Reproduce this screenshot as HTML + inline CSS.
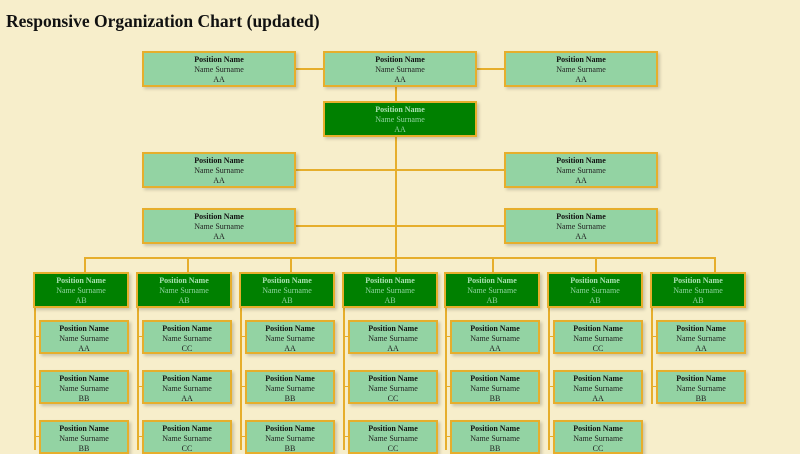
<!DOCTYPE html>
<html><head><meta charset="utf-8"><style>
body{margin:0;width:800px;height:450px;overflow:hidden;background:#f7eecb;font-family:"Liberation Serif",serif;position:relative}
h1{position:absolute;left:6px;top:11px;margin:0;font-size:17.5px;font-weight:bold;color:#111}
.b{position:absolute;box-sizing:border-box;border:2px solid #e6ae2c;background:#93d3a3;text-align:center;font-size:8px;line-height:9.8px;color:#222;padding-top:2px;box-shadow:2px 2px 3px rgba(0,0,0,.18)}
.b b{display:block;color:#111}
.d{background:#008000;color:#90d4a0}
.d b{color:#a8e0b0}
.l{position:absolute;background:#e6ae2c}
</style></head><body>
<h1>Responsive Organization Chart (updated)</h1>
<div class="l" style="left:296px;top:68px;width:208px;height:2px"></div>
<div class="l" style="left:296px;top:169px;width:208px;height:2px"></div>
<div class="l" style="left:296px;top:225px;width:208px;height:2px"></div>
<div class="l" style="left:395px;top:87px;width:2px;height:171px"></div>
<div class="l" style="left:84px;top:257px;width:632px;height:2px"></div>
<div class="l" style="left:84px;top:257px;width:2px;height:15px"></div>
<div class="l" style="left:187px;top:257px;width:2px;height:15px"></div>
<div class="l" style="left:290px;top:257px;width:2px;height:15px"></div>
<div class="l" style="left:395px;top:257px;width:2px;height:15px"></div>
<div class="l" style="left:492px;top:257px;width:2px;height:15px"></div>
<div class="l" style="left:595px;top:257px;width:2px;height:15px"></div>
<div class="l" style="left:714px;top:257px;width:2px;height:15px"></div>
<div class="b" style="left:142px;top:51px;width:154px;height:36px"><b>Position Name</b>Name Surname<br>AA</div>
<div class="b" style="left:323px;top:51px;width:154px;height:36px"><b>Position Name</b>Name Surname<br>AA</div>
<div class="b" style="left:504px;top:51px;width:154px;height:36px"><b>Position Name</b>Name Surname<br>AA</div>
<div class="b d" style="left:323px;top:101px;width:154px;height:36px"><b>Position Name</b>Name Surname<br>AA</div>
<div class="b" style="left:142px;top:152px;width:154px;height:36px"><b>Position Name</b>Name Surname<br>AA</div>
<div class="b" style="left:504px;top:152px;width:154px;height:36px"><b>Position Name</b>Name Surname<br>AA</div>
<div class="b" style="left:142px;top:208px;width:154px;height:36px"><b>Position Name</b>Name Surname<br>AA</div>
<div class="b" style="left:504px;top:208px;width:154px;height:36px"><b>Position Name</b>Name Surname<br>AA</div>

<div class="l" style="left:34px;top:308px;width:2px;height:142px"></div>
<div class="l" style="left:137px;top:308px;width:2px;height:142px"></div>
<div class="l" style="left:240px;top:308px;width:2px;height:142px"></div>
<div class="l" style="left:343px;top:308px;width:2px;height:142px"></div>
<div class="l" style="left:445px;top:308px;width:2px;height:142px"></div>
<div class="l" style="left:548px;top:308px;width:2px;height:142px"></div>
<div class="l" style="left:651px;top:308px;width:2px;height:96px"></div>

<div class="b d" style="left:33px;top:272px;width:96px;height:36px"><b>Position Name</b>Name Surname<br>AB</div>
<div class="b d" style="left:136px;top:272px;width:96px;height:36px"><b>Position Name</b>Name Surname<br>AB</div>
<div class="b d" style="left:239px;top:272px;width:96px;height:36px"><b>Position Name</b>Name Surname<br>AB</div>
<div class="b d" style="left:342px;top:272px;width:96px;height:36px"><b>Position Name</b>Name Surname<br>AB</div>
<div class="b d" style="left:444px;top:272px;width:96px;height:36px"><b>Position Name</b>Name Surname<br>AB</div>
<div class="b d" style="left:547px;top:272px;width:96px;height:36px"><b>Position Name</b>Name Surname<br>AB</div>
<div class="b d" style="left:650px;top:272px;width:96px;height:36px"><b>Position Name</b>Name Surname<br>AB</div>

<div class="l" style="left:34px;top:336px;width:5px;height:1px"></div><div class="b" style="left:39px;top:320px;width:90px;height:34px"><b>Position Name</b>Name Surname<br>AA</div>
<div class="l" style="left:34px;top:386px;width:5px;height:1px"></div><div class="b" style="left:39px;top:370px;width:90px;height:34px"><b>Position Name</b>Name Surname<br>BB</div>
<div class="l" style="left:34px;top:436px;width:5px;height:1px"></div><div class="b" style="left:39px;top:420px;width:90px;height:34px"><b>Position Name</b>Name Surname<br>BB</div>

<div class="l" style="left:137px;top:336px;width:5px;height:1px"></div><div class="b" style="left:142px;top:320px;width:90px;height:34px"><b>Position Name</b>Name Surname<br>CC</div>
<div class="l" style="left:137px;top:386px;width:5px;height:1px"></div><div class="b" style="left:142px;top:370px;width:90px;height:34px"><b>Position Name</b>Name Surname<br>AA</div>
<div class="l" style="left:137px;top:436px;width:5px;height:1px"></div><div class="b" style="left:142px;top:420px;width:90px;height:34px"><b>Position Name</b>Name Surname<br>CC</div>

<div class="l" style="left:240px;top:336px;width:5px;height:1px"></div><div class="b" style="left:245px;top:320px;width:90px;height:34px"><b>Position Name</b>Name Surname<br>AA</div>
<div class="l" style="left:240px;top:386px;width:5px;height:1px"></div><div class="b" style="left:245px;top:370px;width:90px;height:34px"><b>Position Name</b>Name Surname<br>BB</div>
<div class="l" style="left:240px;top:436px;width:5px;height:1px"></div><div class="b" style="left:245px;top:420px;width:90px;height:34px"><b>Position Name</b>Name Surname<br>BB</div>

<div class="l" style="left:343px;top:336px;width:5px;height:1px"></div><div class="b" style="left:348px;top:320px;width:90px;height:34px"><b>Position Name</b>Name Surname<br>AA</div>
<div class="l" style="left:343px;top:386px;width:5px;height:1px"></div><div class="b" style="left:348px;top:370px;width:90px;height:34px"><b>Position Name</b>Name Surname<br>CC</div>
<div class="l" style="left:343px;top:436px;width:5px;height:1px"></div><div class="b" style="left:348px;top:420px;width:90px;height:34px"><b>Position Name</b>Name Surname<br>CC</div>

<div class="l" style="left:445px;top:336px;width:5px;height:1px"></div><div class="b" style="left:450px;top:320px;width:90px;height:34px"><b>Position Name</b>Name Surname<br>AA</div>
<div class="l" style="left:445px;top:386px;width:5px;height:1px"></div><div class="b" style="left:450px;top:370px;width:90px;height:34px"><b>Position Name</b>Name Surname<br>BB</div>
<div class="l" style="left:445px;top:436px;width:5px;height:1px"></div><div class="b" style="left:450px;top:420px;width:90px;height:34px"><b>Position Name</b>Name Surname<br>BB</div>

<div class="l" style="left:548px;top:336px;width:5px;height:1px"></div><div class="b" style="left:553px;top:320px;width:90px;height:34px"><b>Position Name</b>Name Surname<br>CC</div>
<div class="l" style="left:548px;top:386px;width:5px;height:1px"></div><div class="b" style="left:553px;top:370px;width:90px;height:34px"><b>Position Name</b>Name Surname<br>AA</div>
<div class="l" style="left:548px;top:436px;width:5px;height:1px"></div><div class="b" style="left:553px;top:420px;width:90px;height:34px"><b>Position Name</b>Name Surname<br>CC</div>

<div class="l" style="left:651px;top:336px;width:5px;height:1px"></div><div class="b" style="left:656px;top:320px;width:90px;height:34px"><b>Position Name</b>Name Surname<br>AA</div>
<div class="l" style="left:651px;top:386px;width:5px;height:1px"></div><div class="b" style="left:656px;top:370px;width:90px;height:34px"><b>Position Name</b>Name Surname<br>BB</div>
</body></html>
